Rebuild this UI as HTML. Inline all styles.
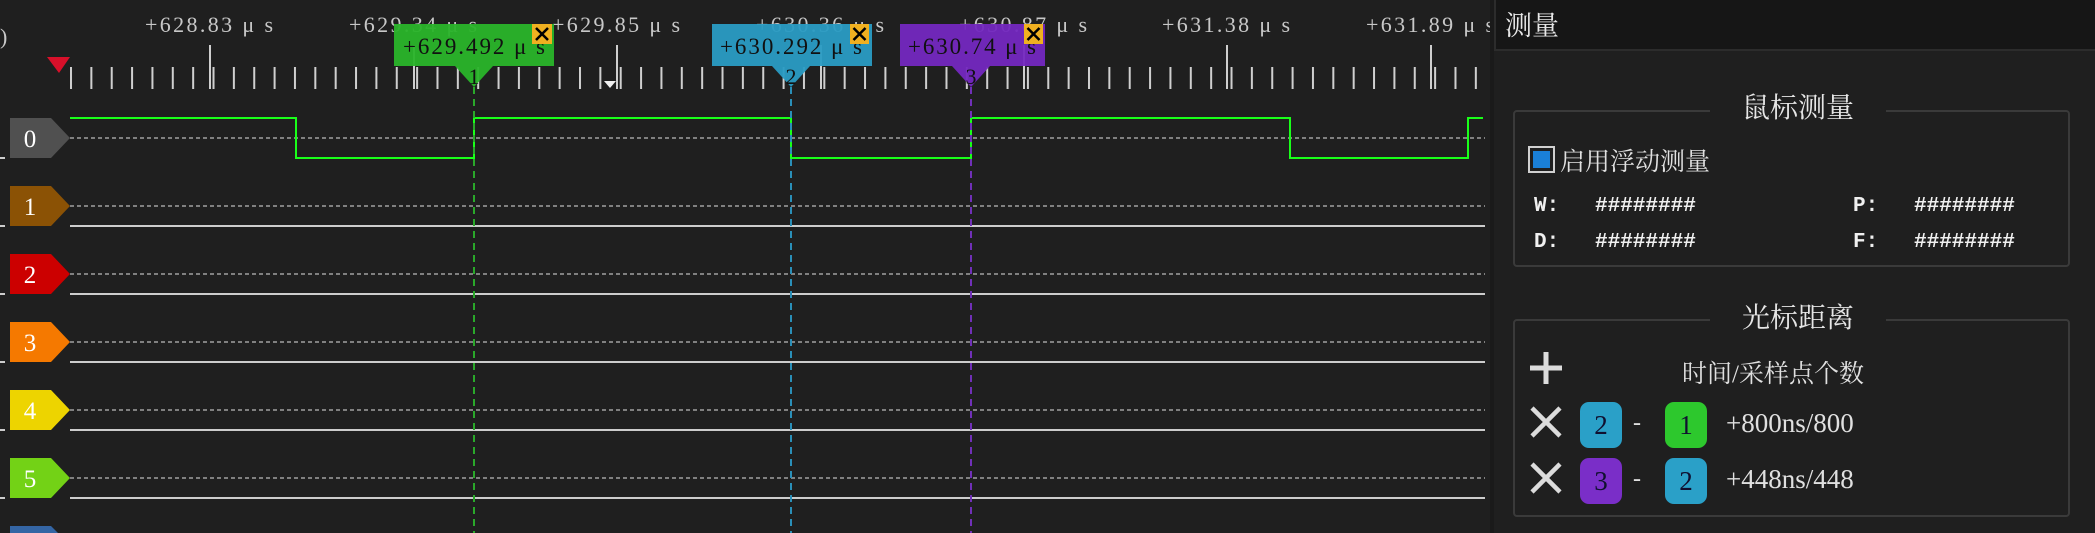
<!DOCTYPE html>
<html><head><meta charset="utf-8"><style>
html,body{margin:0;padding:0;background:#1f1f1f;width:2095px;height:533px;overflow:hidden;position:relative;font-family:"Liberation Serif","Noto Serif CJK SC",serif;color:#e0e0e0}
svg{position:absolute;left:0;top:0}
.cjk{font-family:"Liberation Serif","Noto Serif CJK SC","Noto Sans CJK SC",serif}
.abs{position:absolute;white-space:nowrap}
.grp{position:absolute;border:2px solid #3a3a3a;border-radius:4px}
.gt{position:absolute;background:#1f1f1f;text-align:center;font-size:28px;color:#e6e6e6}
.mono{font-family:"Liberation Mono",monospace;font-size:21px;color:#f0f0f0;font-weight:bold}
.badge{position:absolute;width:42px;height:46px;border-radius:9px;text-align:center;line-height:46px;font-size:27px;color:#101030}
</style></head><body>
<svg width="1490" height="533" viewBox="0 0 1490 533">
<defs>
<pattern id="tk" x="70" y="0" width="20.36" height="533" patternUnits="userSpaceOnUse">
<rect x="0" y="67" width="2" height="22" fill="#cfcfcf"/>
</pattern>
</defs>
<rect x="0" y="0" width="1490" height="533" fill="#1f1f1f"/>
<text x="0" y="44" font-size="22" fill="#c8c8c8">)</text>
<rect x="69" y="0" width="1416" height="100" fill="url(#tk)"/>
<g fill="#cfcfcf">
<rect x="209" y="45" width="2" height="44"/><rect x="413" y="45" width="2" height="44"/><rect x="616" y="45" width="2" height="44"/><rect x="820" y="45" width="2" height="44"/><rect x="1023" y="45" width="2" height="44"/><rect x="1226" y="45" width="2" height="44"/><rect x="1430" y="45" width="2" height="44"/>
</g>
<g font-size="22" fill="#c8c8c8">
<text x="145" y="32" textLength="128" lengthAdjust="spacing">+628.83 μ s</text>
<text x="349" y="32" textLength="128" lengthAdjust="spacing">+629.34 μ s</text>
<text x="552" y="32" textLength="128" lengthAdjust="spacing">+629.85 μ s</text>
<text x="756" y="32" textLength="128" lengthAdjust="spacing">+630.36 μ s</text>
<text x="959" y="32" textLength="128" lengthAdjust="spacing">+630.87 μ s</text>
<text x="1162" y="32" textLength="128" lengthAdjust="spacing">+631.38 μ s</text>
<text x="1366" y="32" textLength="128" lengthAdjust="spacing">+631.89 μ s</text>
</g>
<polygon points="47,57 70,57 59,73" fill="#d8102a"/>
<polygon points="604,81 616,81 610,88" fill="#f0f0f0"/>
<g stroke="#808080" stroke-width="2" stroke-dasharray="4 3">
<line x1="70" y1="138" x2="1485" y2="138"/><line x1="70" y1="206" x2="1485" y2="206"/><line x1="70" y1="274" x2="1485" y2="274"/><line x1="70" y1="342" x2="1485" y2="342"/><line x1="70" y1="410" x2="1485" y2="410"/><line x1="70" y1="478" x2="1485" y2="478"/>
</g>
<g fill="#cccccc">
<rect x="70" y="225" width="1415" height="2"/><rect x="70" y="293" width="1415" height="2"/><rect x="70" y="361" width="1415" height="2"/><rect x="70" y="429" width="1415" height="2"/><rect x="70" y="497" width="1415" height="2"/>
<rect x="0" y="157" width="5" height="2"/><rect x="0" y="225" width="5" height="2"/><rect x="0" y="293" width="5" height="2"/><rect x="0" y="361" width="5" height="2"/><rect x="0" y="429" width="5" height="2"/><rect x="0" y="497" width="5" height="2"/>
</g>
<polygon points="10,118 51,118 70,138 51,158 10,158" fill="#505050"/>
<polygon points="10,186 51,186 70,206 51,226 10,226" fill="#8b5205"/>
<polygon points="10,254 51,254 70,274 51,294 10,294" fill="#cc0000"/>
<polygon points="10,322 51,322 70,342 51,362 10,362" fill="#f57900"/>
<polygon points="10,390 51,390 70,410 51,430 10,430" fill="#edd400"/>
<polygon points="10,458 51,458 70,478 51,498 10,498" fill="#73d216"/>
<polygon points="10,526 51,526 58,533 10,533" fill="#3465a4"/>
<g font-size="25" fill="#ffffff" text-anchor="middle">
<text x="30" y="147">0</text><text x="30" y="215">1</text><text x="30" y="283">2</text><text x="30" y="351">3</text><text x="30" y="419">4</text><text x="30" y="487">5</text>
</g>
<polyline points="70,118 296,118 296,158 474,158 474,118 791,118 791,158 971,158 971,118 1290,118 1290,158 1468,158 1468,118 1483,118" fill="none" stroke="#19ff19" stroke-width="2"/>
<g stroke-width="2" stroke-dasharray="7 5">
<line x1="474" y1="87" x2="474" y2="533" stroke="#2aa82a"/>
<line x1="791" y1="87" x2="791" y2="533" stroke="#2a8fb8"/>
<line x1="971" y1="87" x2="971" y2="533" stroke="#7030b8"/>
</g>
<g opacity="0.95">
<rect x="394" y="24" width="160" height="42" fill="#2ab52a"/>
<polygon points="455,66 493,66 474,87" fill="#2ab52a"/>
<rect x="712" y="24" width="160" height="42" fill="#2a9cc4"/>
<polygon points="772,66 810,66 791,87" fill="#2a9cc4"/>
<rect x="900" y="24" width="145" height="42" fill="#7428c0"/>
<polygon points="952,66 990,66 971,87" fill="#7428c0"/>
</g>
<g font-size="23" fill="#111">
<text x="403" y="54" textLength="142" lengthAdjust="spacing">+629.492 μ s</text>
<text x="720" y="54" textLength="142" lengthAdjust="spacing">+630.292 μ s</text>
<text x="908" y="54" textLength="128" lengthAdjust="spacing">+630.74 μ s</text>
</g>
<g font-size="22" fill="#111" text-anchor="middle">
<text x="474" y="84">1</text><text x="791" y="84">2</text><text x="971" y="84">3</text>
</g>
<g>
<rect x="532" y="24" width="20" height="20" fill="#f0b020"/>
<rect x="850" y="24" width="19" height="20" fill="#f0b020"/>
<rect x="1024" y="24" width="19" height="20" fill="#f0b020"/>
<g stroke="#000" stroke-width="2.5">
<path d="M536 28 L548 40 M548 28 L536 40"/>
<path d="M853.5 28 L865.5 40 M865.5 28 L853.5 40"/>
<path d="M1027.5 28 L1039.5 40 M1039.5 28 L1027.5 40"/>
</g>
</g>
</svg>
<div class="abs" style="left:1490px;top:0;width:4px;height:533px;background:#1a1a1a"></div>
<div class="abs" style="left:1494px;top:0;width:599px;height:49px;background:#161616;border-left:2px solid #2c2c2c;border-bottom:2px solid #2c2c2c"></div>
<div class="abs cjk" style="left:1505px;top:4px;font-size:27px;color:#e8e8e8">测量</div>

<div class="grp" style="left:1513px;top:110px;width:553px;height:153px"></div>
<div class="gt cjk" style="left:1710px;top:86px;width:176px">鼠标测量</div>
<div class="abs" style="left:1528px;top:146px;width:23px;height:23px;border:2px solid #d0d0d0;background:#1f1f1f"></div>
<div class="abs" style="left:1533px;top:151px;width:17px;height:17px;background:#1a80d8"></div>
<div class="abs cjk" style="left:1560px;top:142px;font-size:25px">启用浮动测量</div>
<div class="abs mono" style="left:1534px;top:195px">W:</div>
<div class="abs mono" style="left:1595px;top:195px">########</div>
<div class="abs mono" style="left:1853px;top:195px">P:</div>
<div class="abs mono" style="left:1914px;top:195px">########</div>
<div class="abs mono" style="left:1534px;top:231px">D:</div>
<div class="abs mono" style="left:1595px;top:231px">########</div>
<div class="abs mono" style="left:1853px;top:231px">F:</div>
<div class="abs mono" style="left:1914px;top:231px">########</div>

<div class="grp" style="left:1513px;top:319px;width:553px;height:194px"></div>
<div class="gt cjk" style="left:1710px;top:296px;width:176px">光标距离</div>
<svg style="left:1528px;top:350px" width="36" height="36"><path d="M18 2V34M2 18H34" stroke="#dcdcdc" stroke-width="5"/></svg>
<div class="abs cjk" style="left:1682px;top:354px;font-size:25px">时间/采样点个数</div>
<svg style="left:1528px;top:404px" width="36" height="36"><path d="M4 4L32 32M32 4L4 32" stroke="#dcdcdc" stroke-width="4.5"/></svg>
<svg style="left:1528px;top:460px" width="36" height="36"><path d="M4 4L32 32M32 4L4 32" stroke="#dcdcdc" stroke-width="4.5"/></svg>
<div class="badge" style="left:1580px;top:402px;background:#2aa0c8">2</div>
<div class="abs" style="left:1633px;top:410px;font-size:24px">-</div>
<div class="badge" style="left:1665px;top:402px;background:#2dc82d">1</div>
<div class="abs" style="left:1726px;top:408px;font-size:27px">+800ns/800</div>
<div class="badge" style="left:1580px;top:458px;background:#7a2ec8">3</div>
<div class="abs" style="left:1633px;top:466px;font-size:24px">-</div>
<div class="badge" style="left:1665px;top:458px;background:#2aa0c8">2</div>
<div class="abs" style="left:1726px;top:464px;font-size:27px">+448ns/448</div>
</body></html>
